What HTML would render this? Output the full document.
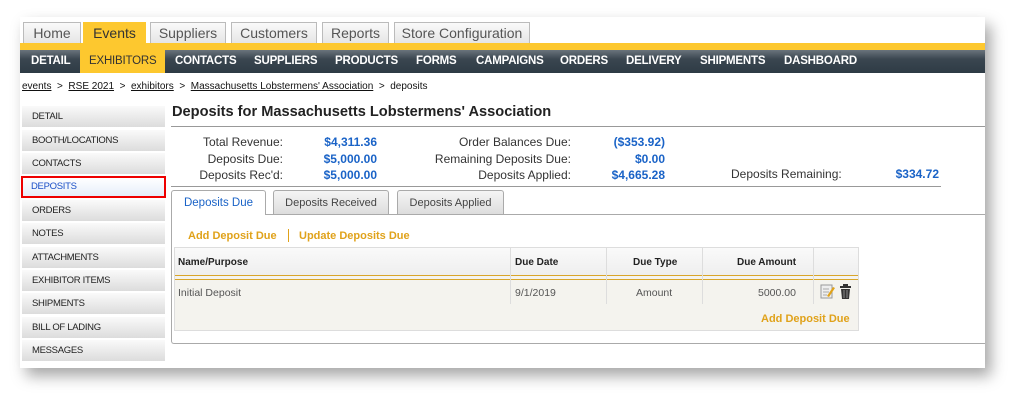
<!DOCTYPE html>
<html><head><style>
*{margin:0;padding:0;box-sizing:border-box}
body{width:1033px;height:417px;background:#fff;font-family:"Liberation Sans",Arial,sans-serif;position:relative;overflow:hidden}
.card{position:absolute;left:20px;top:17px;width:965px;height:351px;background:#fff;box-shadow:6px 8px 14px rgba(0,0,0,.35)}
.a{position:absolute;white-space:nowrap}
.tt{position:absolute;top:22px;height:22px;border:1px solid #bbb;border-bottom:none;background:linear-gradient(#fafafa,#e4e4e4);color:#555;font-size:14px;line-height:21px;text-align:center}
.nav{position:absolute;left:20px;top:50px;width:965px;height:23px;background:linear-gradient(#6a747c,#3a4650 40%,#2e3b45)}
.ni{position:absolute;top:50px;height:23px;line-height:23px;color:#fff;font-weight:bold;font-size:11.5px;letter-spacing:-0.2px}
.sb{position:absolute;left:22px;width:143px;height:21px;background:linear-gradient(#fafafa,#dcdcdc);font-size:9.5px;line-height:21px;padding-left:10px;color:#222;letter-spacing:-0.3px}
.lbl{font-size:12px;color:#333;text-align:right}
.val{font-size:12px;color:#1a63c7;font-weight:bold;text-align:right}
.og{color:#e0a21a;font-weight:bold;font-size:11px}
.th{font-size:10px;font-weight:bold;color:#222}
</style></head><body>
<div class="card"></div>
<div class="tt" style="left:23px;width:58px">Home</div>
<div class="tt" style="left:83px;width:63px;background:#fdc82f;border-color:#fdc82f;color:#333">Events</div>
<div class="tt" style="left:150px;width:76px">Suppliers</div>
<div class="tt" style="left:231px;width:86px">Customers</div>
<div class="tt" style="left:322px;width:67px">Reports</div>
<div class="tt" style="left:394px;width:136px">Store Configuration</div>
<div class="a" style="left:20px;top:43px;width:965px;height:7px;background:#fdc82f"></div>
<div class="nav"></div>
<div class="a" style="left:80px;top:50px;width:85px;height:23px;background:#fdc82f"></div>
<div class="ni" style="left:31px">DETAIL</div>
<div class="ni" style="left:89px;color:#333;font-weight:normal">EXHIBITORS</div>
<div class="ni" style="left:175px">CONTACTS</div>
<div class="ni" style="left:254px">SUPPLIERS</div>
<div class="ni" style="left:335px">PRODUCTS</div>
<div class="ni" style="left:416px">FORMS</div>
<div class="ni" style="left:476px">CAMPAIGNS</div>
<div class="ni" style="left:560px">ORDERS</div>
<div class="ni" style="left:626px">DELIVERY</div>
<div class="ni" style="left:700px">SHIPMENTS</div>
<div class="ni" style="left:784px">DASHBOARD</div>
<div class="a" style="left:22px;top:81px;font-size:10px;color:#111"><u>events</u> &nbsp;&gt;&nbsp; <u>RSE 2021</u> &nbsp;&gt;&nbsp; <u>exhibitors</u> &nbsp;&gt;&nbsp; <u>Massachusetts Lobstermens' Association</u> &nbsp;&gt;&nbsp; deposits</div>
<div class="sb" style="top:106px">DETAIL</div>
<div class="sb" style="top:130px">BOOTH/LOCATIONS</div>
<div class="sb" style="top:153px">CONTACTS</div>
<div class="sb" style="top:176px;background:linear-gradient(#fff,#e6eefa);color:#1a4fc7;border:2px solid #e00;padding-left:8px;left:21px;width:145px;height:22px;line-height:18px">DEPOSITS</div>
<div class="sb" style="top:200px">ORDERS</div>
<div class="sb" style="top:223px">NOTES</div>
<div class="sb" style="top:247px">ATTACHMENTS</div>
<div class="sb" style="top:270px">EXHIBITOR ITEMS</div>
<div class="sb" style="top:293px">SHIPMENTS</div>
<div class="sb" style="top:317px">BILL OF LADING</div>
<div class="sb" style="top:340px">MESSAGES</div>
<div class="a" style="left:172px;top:104px;font-size:14.6px;font-weight:bold;color:#222">Deposits for Massachusetts Lobstermens' Association</div>
<div class="a" style="left:171px;top:126px;width:814px;height:1px;background:#999"></div>
<div class="a lbl" style="right:750px;top:134px;line-height:16.5px">Total Revenue:<br>Deposits Due:<br>Deposits Rec'd:</div>
<div class="a val" style="right:656px;top:134px;line-height:16.5px">$4,311.36<br>$5,000.00<br>$5,000.00</div>
<div class="a lbl" style="right:462px;top:134px;line-height:16.5px">Order Balances Due:<br>Remaining Deposits Due:<br>Deposits Applied:</div>
<div class="a val" style="right:368px;top:134px;line-height:16.5px">($353.92)<br>$0.00<br>$4,665.28</div>
<div class="a lbl" style="left:731px;top:167px">Deposits Remaining:</div>
<div class="a val" style="right:94px;top:167px">$334.72</div>
<div class="a" style="left:171px;top:186px;width:770px;height:1px;background:#999"></div>
<div class="a" style="left:171px;top:214px;width:814px;height:130px;border:1px solid #aaa;border-right:none;border-radius:0 0 0 3px"></div>
<div class="a" style="left:171px;top:190px;width:95px;height:25px;border:1px solid #aaa;border-bottom:none;border-radius:3px 3px 0 0;background:#fff;color:#1a63c7;font-size:11.5px;line-height:24px;text-align:center">Deposits Due</div>
<div class="a" style="left:273px;top:190px;width:116px;height:24px;border:1px solid #aaa;border-bottom:none;border-radius:3px 3px 0 0;background:linear-gradient(#f5f5f5,#ddd);color:#444;font-size:11px;line-height:24px;text-align:center">Deposits Received</div>
<div class="a" style="left:397px;top:190px;width:107px;height:24px;border:1px solid #aaa;border-bottom:none;border-radius:3px 3px 0 0;background:linear-gradient(#f5f5f5,#ddd);color:#444;font-size:11px;line-height:24px;text-align:center">Deposits Applied</div>
<div class="a og" style="left:188px;top:230px">Add Deposit Due</div>
<div class="a" style="left:288px;top:229px;width:1px;height:13px;background:#e0a21a"></div>
<div class="a og" style="left:299px;top:230px">Update Deposits Due</div>
<div class="a" style="left:174px;top:247px;width:685px;height:84px;border:1px solid #ddd;background:#f4f3ee"></div>
<div class="a" style="left:175px;top:248px;width:683px;height:28px;background:linear-gradient(#fafafa,#eee)"></div>
<div class="a" style="left:175px;top:275px;width:683px;height:5px;border-top:1px solid #d9a52a;border-bottom:1px solid #d9a52a;background:#f4f3ee"></div>
<div class="a" style="left:510px;top:248px;width:1px;height:56px;background:#ddd"></div>
<div class="a" style="left:606px;top:248px;width:1px;height:56px;background:#ddd"></div>
<div class="a" style="left:702px;top:248px;width:1px;height:56px;background:#ddd"></div>
<div class="a" style="left:813px;top:248px;width:1px;height:56px;background:#ddd"></div>
<div class="a th" style="left:178px;top:257px">Name/Purpose</div>
<div class="a th" style="left:515px;top:257px">Due Date</div>
<div class="a th" style="left:633px;top:257px">Due Type</div>
<div class="a th" style="left:737px;top:257px">Due Amount</div>
<div class="a" style="left:178px;top:287px;font-size:10.5px;color:#555">Initial Deposit</div>
<div class="a" style="left:515px;top:287px;font-size:10.5px;color:#555">9/1/2019</div>
<div class="a" style="left:636px;top:287px;font-size:10.5px;color:#555">Amount</div>
<div class="a" style="left:758px;top:287px;font-size:10.5px;color:#555">5000.00</div>
<svg class="a" style="left:820px;top:284px" width="34" height="16" viewBox="0 0 34 16"><rect x="1" y="1" width="11" height="13" fill="#eee" stroke="#999"/><path d="M3 5h6M3 8h6M3 11h4" stroke="#aaa"/><path d="M7 12l6-9 2 1-6 9z" fill="#e0a21a"/><rect x="20" y="2" width="11" height="2" fill="#333"/><rect x="23" y="0" width="5" height="2" fill="#333"/><path d="M21 5h9l-1 10h-7z" fill="#333"/><path d="M24 6v8M27 6v8" stroke="#888"/></svg>
<div class="a og" style="left:761px;top:313px">Add Deposit Due</div>
</body></html>
